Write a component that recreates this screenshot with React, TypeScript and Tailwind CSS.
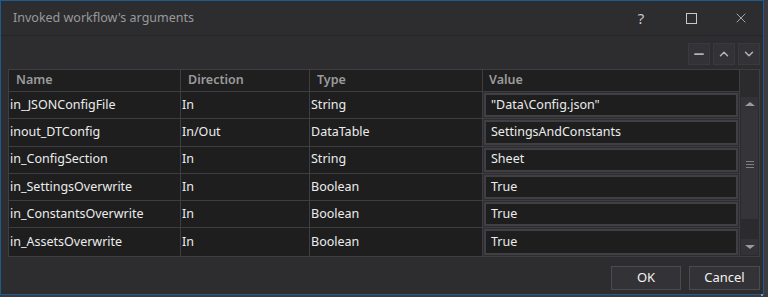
import { ChevronDown, ChevronUp, Minus, X } from "lucide-react";

type Arg = {
  name: string;
  direction: string;
  type: string;
  value: string;
};

const args: Arg[] = [
  { name: "in_JSONConfigFile", direction: "In", type: "String", value: "\"Data\\Config.json\"" },
  { name: "inout_DTConfig", direction: "In/Out", type: "DataTable", value: "SettingsAndConstants" },
  { name: "in_ConfigSection", direction: "In", type: "String", value: "Sheet" },
  { name: "in_SettingsOverwrite", direction: "In", type: "Boolean", value: "True" },
  { name: "in_ConstantsOverwrite", direction: "In", type: "Boolean", value: "True" },
  { name: "in_AssetsOverwrite", direction: "In", type: "Boolean", value: "True" },
];

const font = { fontFamily: "'Segoe UI', 'Noto Sans', 'Open Sans', sans-serif" };

const ToolButton = ({ children }: { children: React.ReactNode }) => (
  <div className="w-[22px] h-[22px] flex items-center justify-center bg-[#333337] border border-[#3a3a3e] text-[#b4b4b8]">
    {children}
  </div>
);

const App = () => {
  return (
    <div className="w-[768px] h-[297px] bg-[#3c3c40] overflow-hidden" style={font}>
      <div className="w-[764px] h-[295px] border border-[#1d5b8f] bg-[#2d2d30] flex flex-col">
        {/* title bar */}
        <div className="h-[35px] flex items-center border-b border-[#252527] shrink-0">
          <span className="pl-[12px] text-[12.5px] text-[#999999]">Invoked workflow's arguments</span>
          <div className="ml-auto flex gap-[6px] text-[#c8c8c8]">
            <div className="w-[44px] h-[34px] flex items-center justify-center text-[15px]">?</div>
            <div className="w-[44px] h-[34px] flex items-center justify-center">
              <div className="w-[11px] h-[11px] border border-[#c8c8c8]" />
            </div>
            <div className="w-[44px] h-[34px] flex items-center justify-center">
              <X size={16} strokeWidth={1.2} />
            </div>
          </div>
        </div>

        {/* toolbar */}
        <div className="flex justify-end gap-[3px] pr-[3px] pt-[7px] h-[33px] shrink-0">
          <ToolButton>
            <Minus size={14} strokeWidth={3} />
          </ToolButton>
          <ToolButton>
            <ChevronUp size={14} strokeWidth={2.5} />
          </ToolButton>
          <ToolButton>
            <ChevronDown size={14} strokeWidth={2.5} />
          </ToolButton>
        </div>

        {/* grid */}
        <div className="ml-[7px] w-[752px] border border-[#3e3e42] flex text-[12.5px] shrink-0">
          <div className="w-[730px]">
            <div className="h-[22px] flex bg-[#1f1f20] text-[#9b9b9b] font-semibold border-b border-[#3e3e42]">
              <div className="w-[172px] pl-[7px] flex items-center border-r border-[#3e3e42]">Name</div>
              <div className="w-[129px] pl-[7px] flex items-center border-r border-[#3e3e42]">Direction</div>
              <div className="w-[173px] pl-[7px] flex items-center border-r border-[#3e3e42]">Type</div>
              <div className="flex-1 pl-[6px] flex items-center">Value</div>
            </div>
            {args.map((a, i) => (
              <div
                key={i}
                className="h-[27.3px] flex bg-[#1e1e1f] text-[#ececec] border-b border-[#3e3e42] last:border-b-0"
              >
                <div className="w-[172px] pl-[1px] flex items-center border-r border-[#3e3e42]">{a.name}</div>
                <div className="w-[129px] pl-[1px] flex items-center border-r border-[#3e3e42]">{a.direction}</div>
                <div className="w-[173px] pl-[1px] flex items-center border-r border-[#3e3e42]">{a.type}</div>
                <div className="flex-1 p-[1px] bg-[#2d2d30]">
                  <div className="h-full border-2 border-[#3f3f44] bg-[#1e1e1f] flex items-center pl-[5px]">
                    {a.value}
                  </div>
                </div>
              </div>
            ))}
          </div>
          {/* scrollbar */}
          <div className="flex-1 bg-[#2b2b2e] border-l border-[#3e3e42] flex flex-col pt-[27px] px-[1px]">
            <div className="h-[13px] flex items-center justify-center bg-[#333337]">
              <div className="w-0 h-0 border-l-[5px] border-r-[5px] border-b-[4px] border-l-transparent border-r-transparent border-b-[#9a9a9a]" />
            </div>
            <div className="h-[109px] bg-[#353539] flex items-center justify-center">
              <div className="flex flex-col gap-[2px]">
                <div className="w-[8px] h-[1px] bg-[#808080]" />
                <div className="w-[8px] h-[1px] bg-[#808080]" />
                <div className="w-[8px] h-[1px] bg-[#808080]" />
              </div>
            </div>
            <div className="flex-1" />
            <div className="h-[16px] flex items-center justify-center bg-[#333337] mb-[1px]">
              <div className="w-0 h-0 border-l-[5px] border-r-[5px] border-t-[4px] border-l-transparent border-r-transparent border-t-[#9a9a9a]" />
            </div>
          </div>
        </div>

        {/* buttons */}
        <div className="flex justify-end gap-[8px] pr-[3px] pt-[9px] text-[13px] text-[#f1f1f1] relative">
          <div className="w-[70px] h-[24px] bg-[#333337] border border-[#4a4a4f] flex items-center justify-center">OK</div>
          <div className="w-[71px] h-[24px] bg-[#333337] border border-[#4a4a4f] flex items-center justify-center">Cancel</div>
          <div className="absolute right-0 bottom-[-12px] grid grid-cols-3 gap-[1px]">
            <span className="w-[2px] h-[2px]" />
            <span className="w-[2px] h-[2px]" />
            <span className="w-[2px] h-[2px] bg-[#9a9a9a]" />
            <span className="w-[2px] h-[2px]" />
            <span className="w-[2px] h-[2px] bg-[#9a9a9a]" />
            <span className="w-[2px] h-[2px] bg-[#9a9a9a]" />
            <span className="w-[2px] h-[2px] bg-[#9a9a9a]" />
            <span className="w-[2px] h-[2px] bg-[#9a9a9a]" />
            <span className="w-[2px] h-[2px] bg-[#9a9a9a]" />
          </div>
        </div>
      </div>
    </div>
  );
};

export default App;
